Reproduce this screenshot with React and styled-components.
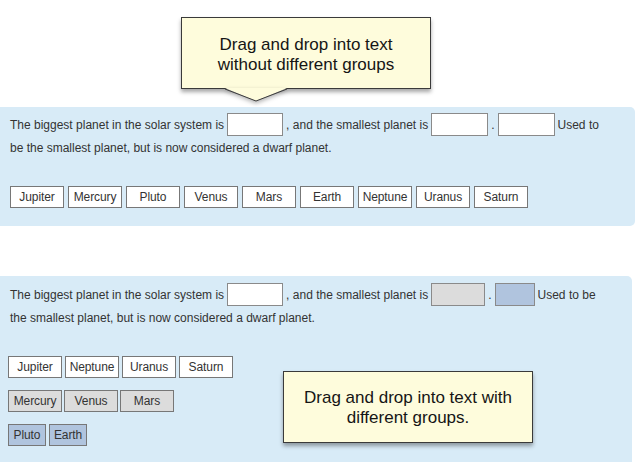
import React from 'react';
import styled, { createGlobalStyle } from 'styled-components';

const GlobalStyle = createGlobalStyle`
    body {
        margin: 0;
        background: #ffffff;
        font-family: "Liberation Sans", Arial, sans-serif;
    }
`;

const Page = styled.div`
    width: 639px;
    height: 462px;
    overflow: hidden;
    position: relative;
`;

const Header = styled.div`
    height: 107px;
    padding: 17px 0 0 181px;
    box-sizing: border-box;
`;

const Callout = styled.div`
    position: ${props => props.floating ? 'absolute' : 'relative'};
    left: ${props => props.floating ? props.left + 'px' : 'auto'};
    top: ${props => props.floating ? props.top + 'px' : 'auto'};
    width: 250px;
    height: 72px;
    box-sizing: border-box;
    background: #fefcdc;
    border: 1px solid #3a3a3a;
    box-shadow: 0 3px 4px rgba(0, 0, 0, 0.35);
    display: flex;
    flex-direction: column;
    align-items: center;
    justify-content: center;
    text-align: center;
    font-size: 17px;
    line-height: 20.5px;
    color: #151515;
    padding-top: ${props => props.shift || 0}px;
`;

const Pointer = styled.svg`
    position: absolute;
    left: 43px;
    top: 70px;
    overflow: visible;
    filter: drop-shadow(0 2px 2px rgba(0, 0, 0, 0.3));
`;

const Panel = styled.div`
    position: relative;
    background: #d8ebf7;
    width: ${props => props.width}px;
    height: ${props => props.height}px;
    margin-top: ${props => props.mt || 0}px;
    border-radius: 0 5px 5px 0;
    box-sizing: border-box;
    padding: ${props => props.pad};
    color: #333333;
    font-size: 12px;
`;

const Line = styled.div`
    display: flex;
    align-items: center;
    height: ${props => props.h || 23}px;
    white-space: pre;
`;

const Slot = styled.span`
    display: inline-block;
    width: ${props => props.width}px;
    height: 23px;
    box-sizing: border-box;
    background: ${props => props.bg || '#ffffff'};
    border: 1px solid #8a8a8a;
    margin: 0 ${props => props.mr || 3}px 0 ${props => props.ml || 3}px;
`;

const ChipRow = styled.div`
    display: flex;
    gap: ${props => props.gap}px;
    margin-top: ${props => props.mt}px;
    margin-left: ${props => props.indent || 0}px;
`;

const Chip = styled.div`
    width: ${props => props.width || 54}px;
    height: 22px;
    box-sizing: border-box;
    border: 1px solid #777777;
    background: ${props => props.bg || '#ffffff'};
    display: flex;
    align-items: center;
    justify-content: center;
    font-size: 12px;
    color: #333333;
    white-space: nowrap;
    letter-spacing: -0.1px;
`;

const GRAY = '#dcdcdc';
const BLUE = '#b0c4de';

const firstRow = ['Jupiter', 'Mercury', 'Pluto', 'Venus', 'Mars', 'Earth', 'Neptune', 'Uranus', 'Saturn'];

function App() {
    return (
        <Page>
            <GlobalStyle />
            <Header>
                <Callout shift={4}>
                    <span>Drag and drop into text</span>
                    <span>without different groups</span>
                    <Pointer width="62" height="14" viewBox="0 0 62 14">
                        <polygon points="0,0 31,13 62,0" fill="#fefcdc" />
                        <polyline points="0,1 31,13 62,1" fill="none" stroke="#3a3a3a" strokeWidth="1" />
                    </Pointer>
                </Callout>
            </Header>

            <Panel width={635} height={119} pad="6px 0 0 10px">
                <Line>
                    <span>The biggest planet in the solar system is</span>
                    <Slot width={56} />
                    <span>, and the smallest planet is</span>
                    <Slot width={57} />
                    <span>.</span>
                    <Slot width={57} />
                    <span>Used to</span>
                </Line>
                <Line h={23}>
                    <span>be the smallest planet, but is now considered a dwarf planet.</span>
                </Line>
                <ChipRow gap={4} mt={27}>
                    {firstRow.map(name => <Chip key={name}>{name}</Chip>)}
                </ChipRow>
            </Panel>

            <Panel width={632} height={200} mt={50} pad="7px 0 0 10px">
                <Line>
                    <span>The biggest planet in the solar system is</span>
                    <Slot width={56} />
                    <span>, and the smallest planet is</span>
                    <Slot width={54} bg={GRAY} />
                    <span>.</span>
                    <Slot width={40} bg={BLUE} />
                    <span>Used to be</span>
                </Line>
                <Line h={23}>
                    <span>the smallest planet, but is now considered a dwarf planet.</span>
                </Line>
                <ChipRow gap={3} mt={27} indent={-2}>
                    {['Jupiter', 'Neptune', 'Uranus', 'Saturn'].map(name => <Chip key={name}>{name}</Chip>)}
                </ChipRow>
                <ChipRow gap={2} mt={12} indent={-2}>
                    {['Mercury', 'Venus', 'Mars'].map(name => <Chip key={name} bg={GRAY}>{name}</Chip>)}
                </ChipRow>
                <ChipRow gap={3} mt={12} indent={-2}>
                    {['Pluto', 'Earth'].map(name => <Chip key={name} bg={BLUE} width={38}>{name}</Chip>)}
                </ChipRow>
                <Callout floating left={283} top={95} shift={2}>
                    <span>Drag and drop into text with</span>
                    <span>different groups.</span>
                </Callout>
            </Panel>
        </Page>
    );
}

export default App;
